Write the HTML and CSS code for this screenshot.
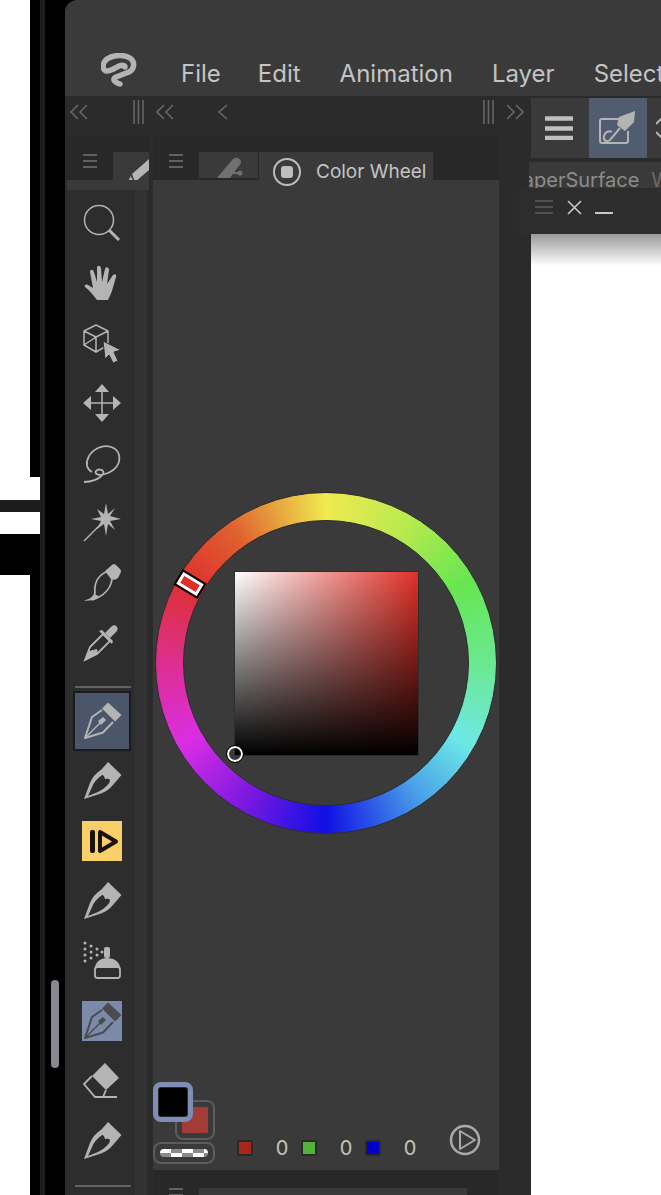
FILE: index.html
```html
<!DOCTYPE html>
<html lang="en">
<head>
    <meta charset="UTF-8">
    <meta name="viewport" content="width=device-width, initial-scale=1.0">
    <title>Color Wheel</title>
    <link rel="stylesheet" href="styles.css">
</head>
<body>
    <svg class="defs" width="0" height="0">
        <symbol id="burger" viewBox="0 0 14 14" preserveAspectRatio="none"><path d="M0 1h14M0 7h14M0 13h14" stroke="currentColor" stroke-width="1.4"/></symbol>
        <symbol id="pen" viewBox="0 0 40 40">
            <path fill="currentColor" fill-rule="evenodd" d="M2 38 8 22Q11 14 20 8L26 1 39.500 14 31 24Q26 30 19 32.500ZM6 35 10 26Q12 20 20 14 22 14 23 18 27 17 28 19 28 22 25 24.500 22 28 16 31Z"/>
        </symbol>
        <symbol id="nib" viewBox="0 0 40 40">
            <path fill="currentColor" d="M20 7.500 26 1.500 39.500 14 33 20.500Z"/>
            <path fill="none" stroke="currentColor" stroke-width="2" stroke-linejoin="round" d="M20 9 10 16 3 37 21 31.500 31 21"/>
            <path fill="none" stroke="currentColor" stroke-width="1.500" d="M3 37 18 22"/>
            <path fill="currentColor" d="M16 20 21 16 24 19 19 24Z"/>
        </symbol>
    </svg>

    <div class="stage">
        <div class="backdrop">
            <div class="art art-top"></div>
            <div class="art art-white"></div>
            <div class="art art-dark"></div>
            <div class="art art-white art-short"></div>
            <div class="art art-black"></div>
            <div class="art art-bottom"></div>
        </div>
        <div class="gutter"></div>
        <div class="scroll-track"><div class="scroll-thumb"></div></div>

        <div class="window">
            <header class="menubar">
                <svg class="logo" viewBox="0 0 36 36" width="36" height="36"><path fill="none" stroke="currentColor" stroke-width="5.500" stroke-linecap="round" stroke-linejoin="round" d="M19 31C13 29 11 26 15 24L28 19C34 16 34 8 29 5 22 1 12 2 6 6 1 10 1 16 5 18 9 19 14 15 18 13 21 12 24 12 24 14"/></svg>
                <nav class="menu">
                    <a href="#">File</a>
                    <a href="#">Edit</a>
                    <a href="#">Animation</a>
                    <a href="#">Layer</a>
                    <a href="#">Select</a>
                </nav>
            </header>

            <div class="content">
                <div class="workspace">
                    <div class="dockbar">
                        <svg class="chev chev-a" width="18" height="16" viewBox="0 0 18 16"><path d="M8 1 1 8l7 7M17 1l-7 7 7 7"/></svg>
                        <svg class="grip grip-a" width="11" height="24" viewBox="0 0 11 24"><path d="M1 0v24M5.500 0v24M10 0v24"/></svg>
                        <svg class="chev chev-b" width="18" height="16" viewBox="0 0 18 16"><path d="M8 1 1 8l7 7M17 1l-7 7 7 7"/></svg>
                        <svg class="chev chev-c" width="10" height="16" viewBox="0 0 10 16"><path d="M9 1 1 8l8 7"/></svg>
                        <svg class="grip grip-b" width="11" height="24" viewBox="0 0 11 24"><path d="M1 0v24M5.500 0v24M10 0v24"/></svg>
                        <svg class="chev chev-d" width="18" height="16" viewBox="0 0 18 16"><path d="M1 1l7 7-7 7M10 1l7 7-7 7"/></svg>
                    </div>

                    <div class="docks">
                        <aside class="tool-dock">
                            <div class="tabs tabs-tool">
                                <svg class="burger" width="14" height="14"><use href="#burger"/></svg>
                                <div class="tool-tab">
                                    <svg width="36" height="38" viewBox="0 0 36 38"><path fill="currentColor" d="M19 22 36 7V18L22 30ZM17.500 24 21 30 14 33Z"/></svg>
                                </div>
                            </div>
                            <div class="tool-strip"></div>
                            <div class="tool-body">
                                <div class="tools">
                                    <div class="tool">
                                        <svg class="icon" viewBox="0 0 40 40"><circle cx="17" cy="17" r="14.500" fill="none" stroke="currentColor" stroke-width="1.500"/><path d="M27 27 37 37" stroke="currentColor" stroke-width="3"/></svg>
                                    </div>
                                    <div class="tool">
                                        <svg class="icon" viewBox="0 0 40 40"><path fill="currentColor" d="M15 37C12 33 9 29 3 24 2 22 4 21 6 22L11 25 8 9C8 6 11 6 12 9L15 19 15 5C15 2 18 2 19 5L20 19 23 6C24 3 27 4 27 7L25 21 31 12C33 10 35 12 34 14L30 28C28 33 27 35 26 37Z"/></svg>
                                    </div>
                                    <div class="tool">
                                        <svg class="icon" viewBox="0 0 40 40"><path fill="none" stroke="currentColor" stroke-width="1.500" stroke-linejoin="round" d="M14 2 26 8V22L14 29 2 22V8ZM2 8 14 14 26 8M14 14V29M2 22 14 14"/><path fill="currentColor" stroke="#2d2d2d" d="M21 18 39 27 32 29 36 38 31 40 27 32 23 36Z"/></svg>
                                    </div>
                                    <div class="tool">
                                        <svg class="icon" viewBox="0 0 40 40"><path fill="currentColor" d="M20 1 27 9H13ZM20 39 13 31H27ZM1 20 9 13V27ZM39 20 31 13V27Z"/><path d="M20 8V32M8 20H32" stroke="currentColor" stroke-width="1.500"/></svg>
                                    </div>
                                    <div class="tool">
                                        <svg class="icon" viewBox="0 0 40 40"><path fill="none" stroke="currentColor" stroke-width="1.800" d="M2 39C9 39 18 36 21 31 23 27 17 25 14 28 12 31 17 33 23 31 33 28 39 21 37 12 35 4 25 1 16 5 8 9 4 16 5 23 6 26 8 28 10 29"/></svg>
                                    </div>
                                    <div class="tool">
                                        <svg class="icon" viewBox="0 0 40 40"><path fill="currentColor" d="M24 0 26 11 33 5 28 13 39 16 28 18 33 27 26 21 24 33 22 21 15 26 19 18 9 16 19 14 15 6 22 11Z"/><path d="M18 22 2 38" stroke="currentColor" stroke-width="1.500"/></svg>
                                    </div>
                                    <div class="tool">
                                        <svg class="icon" viewBox="0 0 40 40"><path fill="currentColor" d="M23 8 30 2Q32 0 34 2L38 6Q40 8 38.500 10L36 15Q33 18 29 16Z"/><path fill="none" stroke="currentColor" stroke-width="1.800" d="M24 9C15 13 12 22 13 31M30 16C29 25 22 33 10 37"/><path fill="currentColor" d="M2 38C6 36 11 35 12 30L14 32 17 33 12 37Z"/></svg>
                                    </div>
                                    <div class="tool">
                                        <svg class="icon" viewBox="0 0 40 40"><path fill="none" stroke="currentColor" stroke-width="1.800" d="M3 37 8 24 21 11 28 18 15 31Z"/><path fill="currentColor" d="M2 38 7 28 15 26 16 31ZM17 8 20 7 31 18 30 21Z"/><path fill="currentColor" d="M23 10 30 3C33 1 37 4 35 8L28 15Z"/></svg>
                                    </div>
                                </div>
                                <hr class="tool-sep tool-sep-top">
                                <div class="tools">
                                    <div class="tool is-active"><svg class="icon" viewBox="0 0 40 40"><use href="#nib"/></svg></div>
                                    <div class="tool"><svg class="icon" viewBox="0 0 40 40"><use href="#pen"/></svg></div>
                                    <div class="tool">
                                        <svg class="icon icon-yellow" viewBox="0 0 40 40"><rect x="8" y="9" width="5" height="23" rx="2" fill="currentColor"/><path fill="none" stroke="currentColor" stroke-width="4" stroke-linejoin="round" d="M18 11 34 20.500 18 30Z"/></svg>
                                    </div>
                                    <div class="tool"><svg class="icon" viewBox="0 0 40 40"><use href="#pen"/></svg></div>
                                    <div class="tool">
                                        <svg class="icon" viewBox="0 0 40 40"><g fill="currentColor"><circle cx="3" cy="2" r="1.500"/><circle cx="3" cy="8" r="1.500"/><circle cx="3" cy="14" r="1.500"/><circle cx="3" cy="20" r="1.500"/><circle cx="9" cy="5" r="1.500"/><circle cx="9" cy="11" r="1.500"/><circle cx="9" cy="17" r="1.500"/><circle cx="15" cy="8" r="1.500"/><circle cx="15" cy="14" r="1.500"/><circle cx="20" cy="11" r="1.500"/><rect x="22" y="6" width="6" height="11" rx="2"/><path d="M13 27C13 21 19 17 25 17 32 17 38 21 38 27Z"/></g><rect x="13" y="26" width="25" height="11" rx="2.500" fill="none" stroke="currentColor" stroke-width="1.800"/></svg>
                                    </div>
                                    <div class="tool"><svg class="icon icon-blue" viewBox="0 0 40 40"><use href="#nib"/></svg></div>
                                    <div class="tool">
                                        <svg class="icon" viewBox="0 0 40 40"><path fill="currentColor" d="M23 2 37 17 24 29 10 15Z"/><path fill="none" stroke="currentColor" stroke-width="1.800" d="M10 15 2 23 13 36H21L24 29M13 36H35"/></svg>
                                    </div>
                                    <div class="tool"><svg class="icon" viewBox="0 0 40 40"><use href="#pen"/></svg></div>
                                </div>
                                <hr class="tool-sep tool-sep-bottom">
                            </div>
                        </aside>

                        <section class="color-dock">
                            <div class="tabs tabs-color">
                                <svg class="burger" width="14" height="14"><use href="#burger"/></svg>
                                <div class="brush-tab">
                                    <svg width="40" height="26" viewBox="0 0 40 26"><path fill="#707070" d="M6 26 22 7C25 4 31 7 30 11L19 26ZM19 20h10v2H19Z"/><circle cx="29" cy="21" r="2.500" fill="#707070"/></svg>
                                </div>
                                <div class="color-tab">
                                    <span class="radio"><span class="radio-dot"></span></span>
                                    <span class="color-tab-label">Color Wheel</span>
                                </div>
                            </div>

                            <div class="color-panel">
                                <div class="wheel-area">
                                    <div class="wheel">
                                        <div class="wheel-hole">
                                            <div class="sv-square"></div>
                                        </div>
                                        <div class="hue-marker"></div>
                                        <div class="sv-marker"></div>
                                    </div>
                                </div>

                                <div class="color-footer">
                                    <div class="swatches">
                                        <div class="swatch-back"><div class="swatch-back-fill"></div></div>
                                        <div class="swatch-main"><div class="swatch-main-fill"></div></div>
                                        <div class="swatch-clear"><div class="swatch-clear-fill"></div></div>
                                    </div>
                                    <div class="rgb">
                                        <span class="chip chip-r"></span><span class="rgb-val">0</span>
                                        <span class="chip chip-g"></span><span class="rgb-val">0</span>
                                        <span class="chip chip-b"></span><span class="rgb-val">0</span>
                                    </div>
                                    <svg class="play" width="32" height="32" viewBox="0 0 32 32"><circle cx="16" cy="16" r="14" fill="none" stroke="currentColor" stroke-width="2.500"/><path fill="none" stroke="currentColor" stroke-width="2" stroke-linejoin="round" d="M11 7 26 16 11 25Z"/></svg>
                                </div>
                            </div>

                            <div class="next-tabs">
                                <svg class="burger" width="14" height="14"><use href="#burger"/></svg>
                                <div class="next-tab"></div>
                            </div>
                        </section>
                    </div>
                </div>

                <div class="canvas-side">
                    <div class="toolbar">
                        <svg class="toolbar-burger" width="28" height="24" viewBox="0 0 28 24"><path d="M0 2.500h28M0 12.500h28M0 22h28" stroke="currentColor" stroke-width="4.500"/></svg>
                        <div class="toolbar-btn">
                            <svg width="40" height="40" viewBox="0 0 40 40"><path fill="none" stroke="currentColor" stroke-width="2" d="M21 11H4Q2 11 2 13V33Q2 35 4 35H28Q30 35 30 33V23"/><path fill="currentColor" d="M21 9 37 3 36 14 27 23 19 17Z"/><path fill="none" stroke="currentColor" stroke-width="2" d="M22 20 12 32C8 35 5 32 6 28 7 24 11 22 14 24"/></svg>
                        </div>
                        <svg class="toolbar-cut" width="5" height="20" viewBox="0 0 5 20"><path fill="none" stroke="currentColor" stroke-width="2" d="M0 6 6 0M0 14 6 20"/></svg>
                    </div>
                    <div class="layer-tabs"><span class="layer-tab">PaperSurface</span><span class="layer-tab layer-tab-next">Watercolor</span></div>
                    <div class="float-bar">
                        <svg class="burger" width="18" height="14"><use href="#burger"/></svg>
                        <svg class="float-x" width="15" height="15" viewBox="0 0 15 15"><path d="M1 1 14 14M14 1 1 14" stroke="currentColor" stroke-width="1.600"/></svg>
                        <span class="float-min"></span>
                    </div>
                    <div class="canvas"></div>
                </div>
            </div>
        </div>
    </div>
</body>
</html>
```

FILE: styles.css
```css
:root {
    --panel: #3a3a3a;
    --band: #2b2b2b;
    --tool-bg: #2d2d2d;
    --icon: #b4b4b4;
    --muted: #6a6a6a;
    --text: #c4c4c4;
}

html, body {
    margin: 0;
    height: 100%;
}

body {
    font-family: Inter, 'Liberation Sans', sans-serif;
    background: #000;
    overflow: hidden;
}

.defs {
    position: absolute;
}

.stage {
    display: flex;
    width: 661px;
    height: 1195px;
    overflow: hidden;
}

/* what's behind the app window */
.backdrop {
    width: 40px;
    flex: none;
    display: flex;
    flex-direction: column;
}

.art-top {
    height: 477px;
    background: #fff;
    border-right: 10px solid #000;
}

.art-white {
    height: 23px;
    background: #fff;
}

.art-short {
    height: 22px;
}

.art-dark {
    height: 12px;
    background: #1c1c1e;
}

.art-black {
    height: 41px;
    background: #000;
}

.art-bottom {
    flex: 1;
    background: #fff;
    border-right: 10px solid #000;
}

.gutter {
    width: 5px;
    flex: none;
    background: #1e1e1e;
}

.scroll-track {
    width: 20px;
    flex: none;
    padding: 980px 0 0 6px;
    box-sizing: border-box;
}

.scroll-thumb {
    width: 8px;
    height: 88px;
    border-radius: 4px;
    background: #88888e;
}

.window {
    flex: 1;
    display: flex;
    flex-direction: column;
    background: var(--panel);
    border-top-left-radius: 12px;
    overflow: hidden;
}

.menubar {
    height: 96px;
    flex: none;
    display: flex;
    align-items: flex-end;
    color: var(--icon);
}

.logo {
    margin: 0 0 7px 36px;
    flex: none;
}

.menu {
    display: flex;
    gap: 39px;
    margin-left: 44px;
    padding-bottom: 7px;
}

.menu a {
    color: var(--text);
    text-decoration: none;
    font-size: 24px;
    line-height: 30px;
    white-space: nowrap;
}

.menu a:nth-child(2) {
    margin-left: -2px;
}

.content {
    flex: 1;
    display: flex;
    min-height: 0;
}

.workspace {
    width: 466px;
    flex: none;
    display: flex;
    flex-direction: column;
    background: var(--band);
}

.dockbar {
    height: 40px;
    flex: none;
    display: flex;
    align-items: center;
}

.chev path,
.grip path {
    fill: none;
    stroke: #666;
    stroke-width: 1.600;
}

.chev-a { margin-left: 5px; margin-top: -8px; }
.grip-a { margin-left: 45px; margin-top: -8px; }
.chev-b { margin-left: 12px; margin-top: -8px; }
.chev-c { margin-left: 44px; margin-top: -8px; }
.grip-b { margin-left: 255px; margin-top: -8px; }
.chev-d { margin-left: 12px; margin-top: -8px; }

.docks {
    flex: 1;
    display: flex;
    min-height: 0;
}

.tool-dock {
    width: 84px;
    flex: none;
    margin-right: 4px;
    display: flex;
    flex-direction: column;
}

.tabs {
    height: 44px;
    flex: none;
    display: flex;
    align-items: flex-start;
    background: #282828;
    color: #777;
}

.tabs-tool {
    margin-left: 2px;
}

.burger {
    color: #747474;
    flex: none;
}

.tabs-tool .burger {
    margin: 18px 0 0 16px;
}

.tool-tab {
    width: 36px;
    height: 28px;
    margin: 16px 0 0 16px;
    background: var(--panel);
    color: var(--icon);
}

.tool-tab svg {
    display: block;
}

.tool-strip {
    height: 10px;
    margin-left: 2px;
    flex: none;
    background: var(--panel);
}

.tool-body {
    flex: 1;
    width: 70px;
    padding-top: 3px;
    background: var(--tool-bg);
    box-shadow: 12px 0 0 #323232;
}

.tool {
    height: 60px;
    margin: 0 4px 0 8px;
    display: flex;
    align-items: center;
    justify-content: center;
    color: var(--icon);
    box-sizing: border-box;
}

.tool.is-active {
    background: #4c566a;
    border: 2px solid #1b1b1b;
}

.icon {
    width: 40px;
    height: 40px;
    flex: none;
    display: block;
}

.icon-yellow {
    background: #f9cf6a;
    color: #1a1108;
}

.icon-blue {
    background: #7a8aa8;
    color: #4b4b4f;
}

.tool-sep {
    height: 2px;
    margin: 0 4px 0 10px;
    border: 0;
    background: #626262;
}

.tool-sep-top {
    margin-top: 13px;
    margin-bottom: 3px;
}

.tool-sep-bottom {
    margin-top: 14px;
}

.color-dock {
    width: 346px;
    flex: none;
    display: flex;
    flex-direction: column;
}

.tabs-color .burger {
    margin: 18px 0 0 16px;
}

.brush-tab {
    width: 59px;
    height: 26px;
    margin: 16px 0 0 16px;
    background: var(--panel);
    overflow: hidden;
}

.brush-tab svg {
    display: block;
    margin-left: 12px;
}

.color-tab {
    width: 174px;
    height: 28px;
    margin: 16px 0 0 1px;
    background: var(--panel);
    position: relative;
    display: flex;
    align-items: flex-start;
}

.radio {
    position: absolute;
    left: 14px;
    top: 6px;
    width: 24px;
    height: 24px;
    border: 2px solid #bdbdbd;
    border-radius: 50%;
    display: flex;
    align-items: center;
    justify-content: center;
    background: var(--panel);
}

.radio-dot {
    width: 12px;
    height: 12px;
    border-radius: 3px;
    background: #bdbdbd;
}

.color-tab-label {
    margin: 8px 0 0 57px;
    font-size: 19px;
    line-height: 24px;
    color: var(--text);
    white-space: nowrap;
}

.color-panel {
    height: 990px;
    flex: none;
    background: var(--panel);
    display: flex;
    flex-direction: column;
}

.wheel-area {
    padding: 312px 0 0 2px;
}

.wheel {
    position: relative;
    width: 342px;
    height: 342px;
    border-radius: 50%;
    box-sizing: border-box;
    border: 1px solid #2c2c2c;
    background: conic-gradient(
        #f0ea50 0deg,
        #b8ea4e 30deg,
        #66e650 60deg,
        #6ce892 90deg,
        #6ce8e6 120deg,
        #4aa0e8 145deg,
        #1010e4 180deg,
        #7a18e0 210deg,
        #d82ee4 240deg,
        #dd2f90 270deg,
        #de3030 300deg,
        #e0602e 325deg,
        #f0ea50 360deg
    );
    display: flex;
    align-items: center;
    justify-content: center;
}

.wheel-hole {
    width: 286px;
    height: 286px;
    border-radius: 50%;
    box-sizing: border-box;
    border: 1px solid #2c2c2c;
    background: var(--panel);
    display: flex;
    align-items: center;
    justify-content: center;
}

.sv-square {
    width: 183px;
    height: 183px;
    box-shadow: 0 0 0 1px #2e2e2e;
    background:
        linear-gradient(to bottom, rgba(0, 0, 0, 0), #000),
        linear-gradient(to right, #fff, #e03028);
}

.hue-marker {
    position: absolute;
    left: 22px;
    top: 84px;
    width: 24px;
    height: 14px;
    box-sizing: border-box;
    background: #dd3028;
    border: 3px solid #fff;
    outline: 2px solid #000;
    transform: rotate(31deg);
}

.sv-marker {
    position: absolute;
    left: 70.500px;
    top: 253px;
    width: 16px;
    height: 16px;
    box-sizing: border-box;
    border-radius: 50%;
    border: 2.500px solid #fff;
    outline: 1px solid #000;
}

.color-footer {
    position: relative;
    flex: 1;
}

.swatches {
    position: absolute;
    left: 0;
    bottom: 6px;
    width: 62px;
    height: 82px;
}

.swatch-main {
    position: absolute;
    left: 0;
    top: 0;
    width: 40px;
    height: 40px;
    box-sizing: border-box;
    border: 5px solid #7f8db5;
    border-radius: 8px;
    background: #2a2a2a;
    padding: 1px;
}

.swatch-main-fill {
    height: 100%;
    background: #000;
    border-radius: 2px;
}

.swatch-back {
    position: absolute;
    left: 22px;
    top: 18px;
    width: 40px;
    height: 40px;
    box-sizing: border-box;
    border: 2px solid #5c5c5c;
    border-radius: 8px;
    padding: 5px;
}

.swatch-back-fill {
    height: 100%;
    background: #a33b36;
    border-radius: 1px;
}

.swatch-clear {
    position: absolute;
    left: 0;
    top: 60px;
    width: 62px;
    height: 22px;
    box-sizing: border-box;
    border: 2px solid #5c5c5c;
    border-radius: 8px;
    padding: 5px;
}

.swatch-clear-fill {
    height: 8px;
    border-radius: 4px;
    background: conic-gradient(#8a8a8a 25%, #fff 0 50%, #8a8a8a 0 75%, #fff 0) 0 0 / 22px 8px;
}

.rgb {
    position: absolute;
    left: 84px;
    bottom: 8px;
    height: 24px;
    display: flex;
    align-items: center;
}

.chip {
    width: 16px;
    height: 16px;
    box-sizing: border-box;
    border: 2px solid #2a2a2a;
    border-radius: 2px;
    margin-top: -4px;
}

.chip-r { background: #a8251c; }
.chip-g { background: #50b335; }
.chip-b { background: #0000cc; }

.rgb-val {
    width: 38px;
    padding-left: 10px;
    text-align: center;
    font-size: 20px;
    line-height: 24px;
    color: var(--text);
    margin-top: -4px;
}

.play {
    position: absolute;
    left: 296px;
    bottom: 14px;
    color: #aaa;
}

.next-tabs {
    flex: 1;
    display: flex;
    align-items: flex-start;
    background: #282828;
    padding-top: 18px;
}

.next-tabs .burger {
    margin-left: 16px;
}

.next-tab {
    width: 268px;
    height: 20px;
    margin-left: 16px;
    background: var(--panel);
}

.canvas-side {
    position: relative;
    flex: 1;
    min-width: 0;
    display: flex;
    flex-direction: column;
    background: var(--band);
}

.toolbar {
    height: 60px;
    flex: none;
    margin-top: 2px;
    display: flex;
    align-items: center;
    background: var(--panel);
    color: #c0c0c0;
}

.toolbar-burger {
    margin-left: 14px;
    flex: none;
}

.toolbar-btn {
    width: 58px;
    height: 60px;
    flex: none;
    margin-left: 16px;
    background: #525c70;
    color: var(--icon);
    display: flex;
    align-items: center;
    justify-content: center;
}

.toolbar-cut {
    flex: none;
    margin-left: 9px;
    color: var(--icon);
}

.layer-tabs {
    height: 26px;
    flex: none;
    margin: 4px 0 0 -2px;
    background: var(--panel);
    display: flex;
    gap: 12px;
    overflow: hidden;
    color: #8c8c8c;
    font-size: 20px;
    line-height: 36px;
    white-space: nowrap;
}

.layer-tab:first-child {
    margin-left: -19px;
}

.layer-tab-next {
    color: #6a6a6a;
}

.float-bar {
    position: absolute;
    left: -12px;
    top: 92px;
    width: 142px;
    height: 46px;
    background: #2d2d2d;
    display: flex;
    align-items: flex-start;
    z-index: 2;
    color: #c8c8c8;
}

.float-bar .burger {
    margin: 12px 0 0 16px;
    color: #5c5c5c;
}

.float-x {
    margin: 12px 0 0 14px;
}

.float-min {
    width: 18px;
    height: 2px;
    margin: 24px 0 0 13px;
    background: #c8c8c8;
}

.canvas {
    flex: 1;
    margin-top: 46px;
    background: linear-gradient(#9a9a9a, #fff 32px);
}
```
